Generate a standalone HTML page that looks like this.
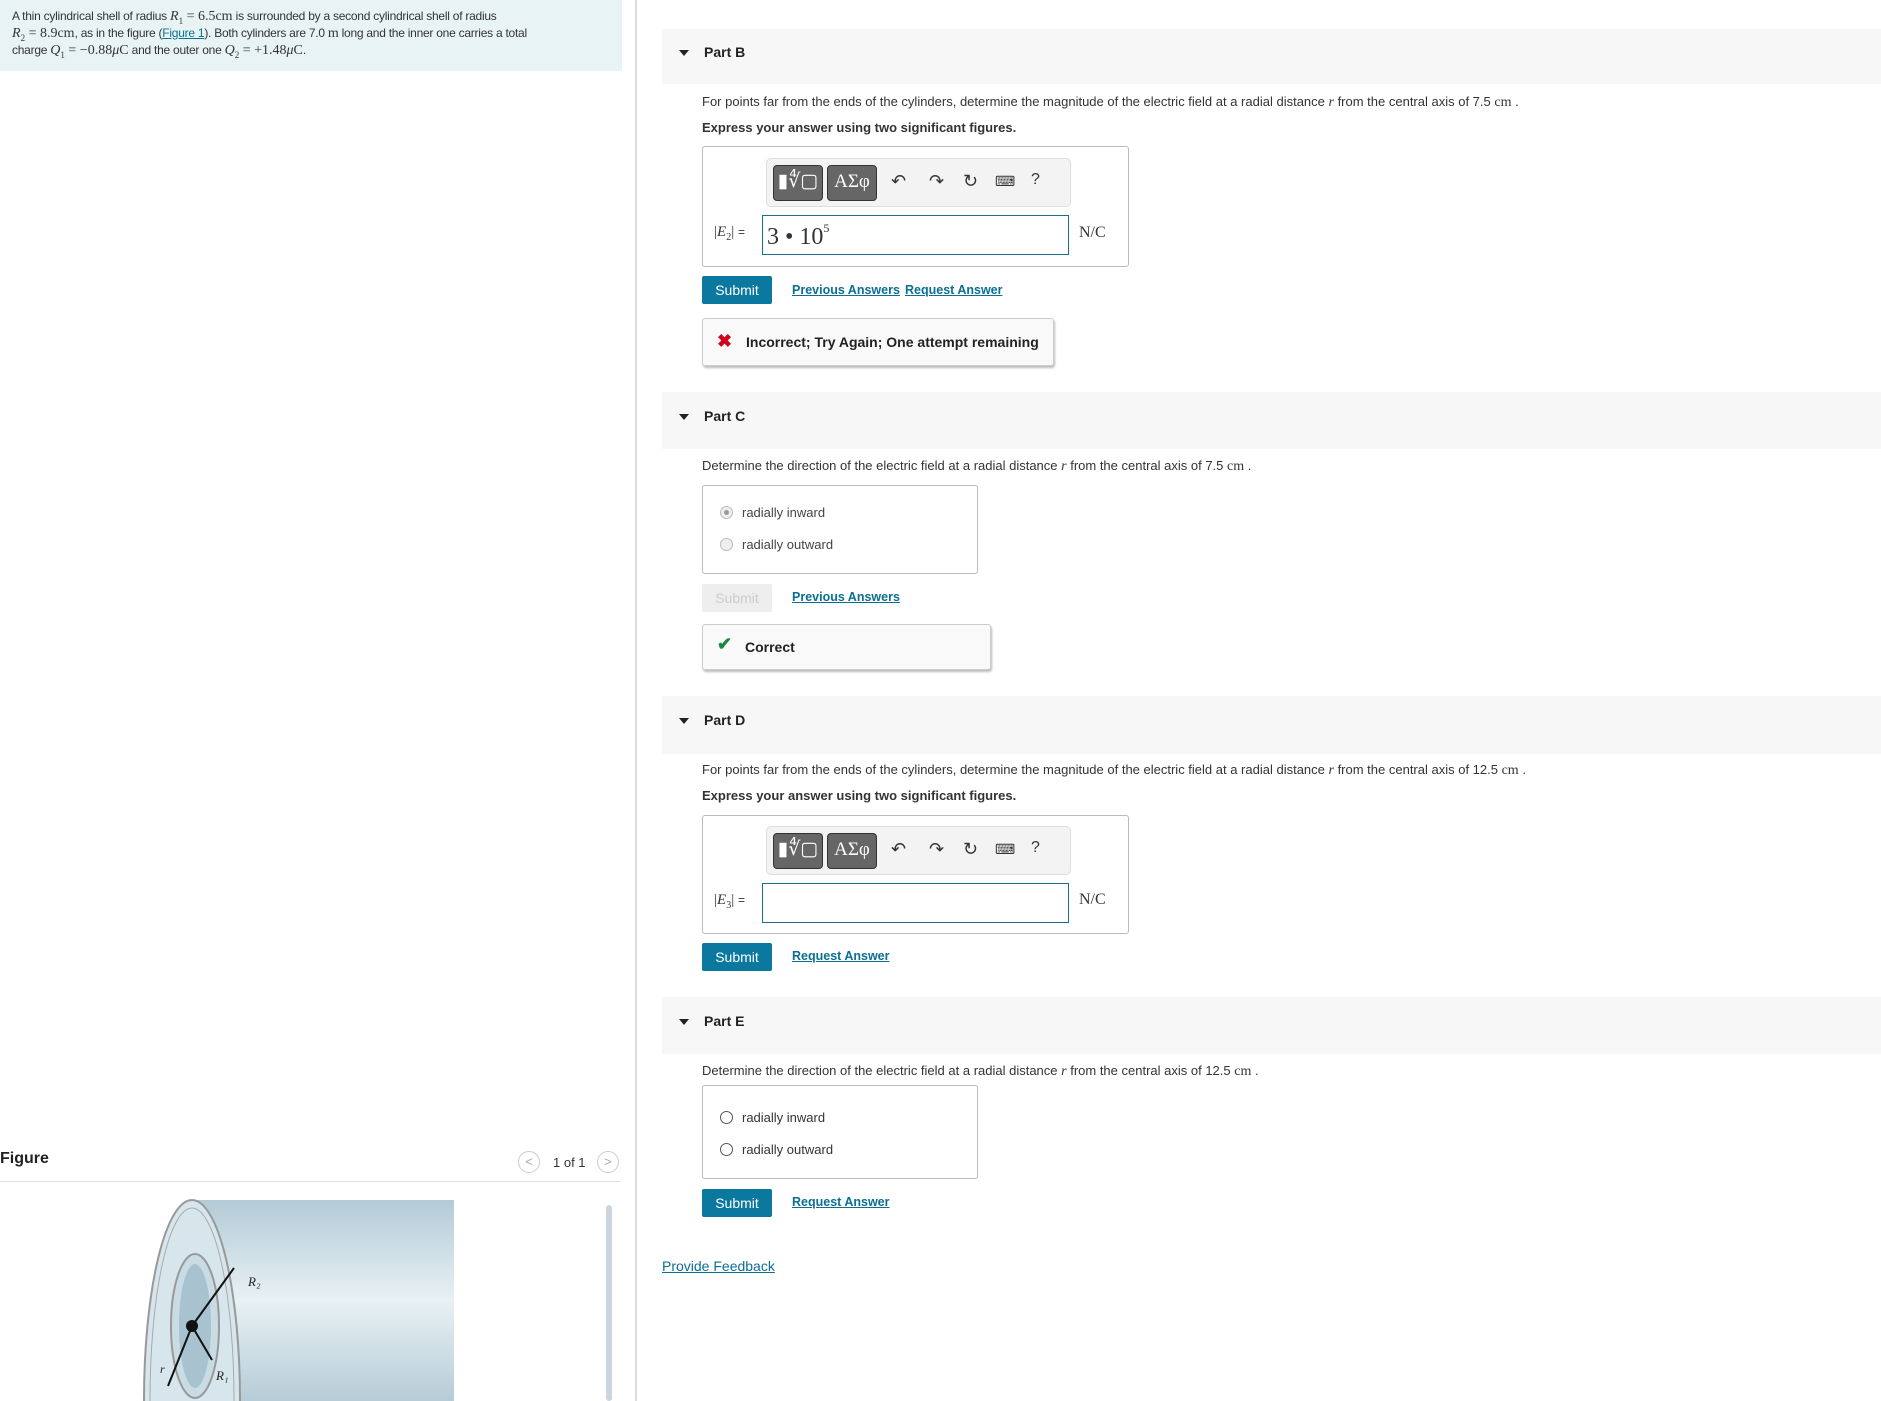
<!DOCTYPE html>
<html><head><meta charset="utf-8"><style>
html,body{margin:0;width:1881px;height:1401px;overflow:hidden}
body{position:relative;background:#fff;font-family:"Liberation Sans",sans-serif;color:#333}
.a{position:absolute}
.m{font-family:"Liberation Serif",serif}
sub{line-height:0}
.band{position:absolute;left:662px;width:1219px;background:#f7f7f7}
.band .t{position:absolute;left:17px;top:50%;margin-top:-7px;width:0;height:0;border-left:5px solid transparent;border-right:5px solid transparent;border-top:6px solid #222}
.band .l{position:absolute;left:42px;top:50%;margin-top:-13px;font-size:14px;color:#222;font-weight:bold}
.txt{position:absolute;left:702px;font-size:13px;color:#333}
.bold{font-weight:bold;color:#333}
.box{position:absolute;left:702px;border:1px solid #bbb;border-radius:3px;background:#fff}
.tb{position:absolute;left:766px;width:303px;height:47px;background:#f3f3f3;border:1px solid #ddd;border-radius:5px}
.btn{position:absolute;top:6px;height:34px;background:#666;border:1px solid #333;border-radius:4px;color:#fff;font-family:"Liberation Serif",serif;font-size:19px;text-align:center;line-height:32px}
.ic{position:absolute;top:12px;font-size:18px;color:#333}
.inp{position:absolute;left:762px;width:305px;height:38px;border:1px solid #1a6f8d}
.sub{position:absolute;left:702px;width:70px;height:28px;background:#0b78a0;color:#fff;font-size:14px;text-align:center;line-height:28px;border-radius:2px}
.lk{position:absolute;font-size:12.5px;color:#0b6f94;text-decoration:underline;font-weight:bold}
.fb{position:absolute;left:702px;border:1px solid #ccc;border-radius:3px;background:#f9f9f9;box-shadow:1px 2px 2px #bbb}
.rd{position:absolute;left:720px;width:11px;height:11px;border:1px solid #999;border-radius:50%;background:#fff}
.rl{position:absolute;left:742px;font-size:13px;color:#333}
</style></head><body>
<div class="a" style="left:0;top:0;width:622px;height:71px;background:#e8f4f4"></div>
<div class="a" style="left:12px;top:8px;width:605px;font-size:12px;letter-spacing:-0.25px;line-height:16px;color:#333">A thin cylindrical shell of radius <span class="m" style="font-size:14px;letter-spacing:0"><i>R</i><sub style="font-size:9px">1</sub> = 6.5cm</span> is surrounded by a second cylindrical shell of radius<br><span class="m" style="font-size:14px;letter-spacing:0"><i>R</i><sub style="font-size:9px">2</sub> = 8.9cm</span>, as in the figure (<span style="color:#0b6f94;text-decoration:underline">Figure 1</span>). Both cylinders are 7.0 <span class="m" style="font-size:14px">m</span> long and the inner one carries a total<br>charge <span class="m" style="font-size:14px;letter-spacing:0"><i>Q</i><sub style="font-size:9px">1</sub> = −0.88<i>μ</i>C</span> and the outer one <span class="m" style="font-size:14px;letter-spacing:0"><i>Q</i><sub style="font-size:9px">2</sub> = +1.48<i>μ</i>C</span>.</div>
<div class="a" style="left:635px;top:0;width:2px;height:1401px;background:#ddd"></div>
<div class="a" style="left:0;top:1150px;font-size:16px;font-weight:bold;color:#222">Figure</div>
<div class="a" style="left:518px;top:1151px;width:20px;height:20px;border:1px solid #ccc;border-radius:50%;color:#aaa;font-size:13px;text-align:center;line-height:20px">&lt;</div>
<div class="a" style="left:553px;top:1155px;font-size:13px">1 of 1</div>
<div class="a" style="left:597px;top:1151px;width:20px;height:20px;border:1px solid #ccc;border-radius:50%;color:#aaa;font-size:13px;text-align:center;line-height:20px">&gt;</div>
<div class="a" style="left:0;top:1181px;width:620px;height:1px;background:#ddd"></div>
<div class="a" style="left:606px;top:1205px;width:6px;height:196px;background:#ccd6de;border-radius:3px"></div>
<svg class="a" style="left:140px;top:1195px" width="320" height="206">
<defs><linearGradient id="g" x1="0" y1="0" x2="0" y2="1"><stop offset="0" stop-color="#b3cbd6"/><stop offset=".5" stop-color="#e8f1f4"/><stop offset="1" stop-color="#b6ccd6"/></linearGradient></defs>
<rect x="52" y="5" width="262" height="201" fill="url(#g)"/>
<ellipse cx="52" cy="205" rx="48" ry="200" fill="#d6e6ec" stroke="#999" stroke-width="2"/>
<ellipse cx="52" cy="205" rx="42" ry="192" fill="none" stroke="#aaa"/>
<ellipse cx="55" cy="131" rx="24" ry="72" fill="#c9dce4" stroke="#999" stroke-width="2"/>
<ellipse cx="55" cy="131" rx="16" ry="62" fill="#a8c3cf"/>
<line x1="52" y1="131" x2="94" y2="73" stroke="#111" stroke-width="2"/>
<line x1="52" y1="131" x2="28" y2="191" stroke="#111" stroke-width="2"/>
<line x1="52" y1="131" x2="72" y2="165" stroke="#111" stroke-width="2"/>
<circle cx="52" cy="131" r="6" fill="#111"/>
<text x="108" y="91" font-family="Liberation Serif" font-style="italic" font-size="13" fill="#222">R₂</text>
<text x="76" y="185" font-family="Liberation Serif" font-style="italic" font-size="13" fill="#222">R₁</text>
<text x="20" y="178" font-family="Liberation Serif" font-style="italic" font-size="12" fill="#222">r</text>
</svg>

<!-- Part B -->
<div class="band" style="top:29px;height:55px"><div class="t"></div><div class="l">Part B</div></div>
<div class="txt" style="top:94px">For points far from the ends of the cylinders, determine the magnitude of the electric field at a radial distance <i class="m" style="font-size:14px">r</i> from the central axis of 7.5 <span class="m" style="font-size:14px">cm</span> .</div>
<div class="txt bold" style="top:120px">Express your answer using two significant figures.</div>
<div class="box" style="top:146px;width:425px;height:119px"></div>
<div class="tb" style="top:158px"><div class="btn" style="left:6px;width:48px">▮∜▢</div><div class="btn" style="left:60px;width:48px">ΑΣφ</div><div class="ic" style="left:124px">↶</div><div class="ic" style="left:162px">↷</div><div class="ic" style="left:196px">↻</div><div class="ic" style="left:228px;font-size:14px;top:14px">⌨</div><div class="ic" style="left:264px;font-size:16px">?</div></div>
<div class="a m" style="left:714px;top:224px;font-size:15px">|<i>E</i><sub style="font-size:10px">2</sub>| <span style="font-family:'Liberation Sans';font-size:12px">=</span></div>
<div class="inp" style="top:215px"><span class="m" style="position:absolute;left:4px;top:5px;font-size:24px">3 • 10<sup style="font-size:12px;vertical-align:12px">5</sup></span></div>
<div class="a m" style="left:1079px;top:224px;font-size:16px">N/C</div>
<div class="sub" style="top:276px">Submit</div>
<div class="lk" style="left:792px;top:283px">Previous Answers</div>
<div class="lk" style="left:905px;top:283px">Request Answer</div>
<div class="fb" style="top:318px;width:350px;height:46px"><span style="position:absolute;left:14px;top:12px;color:#d0021b;font-size:18px;font-weight:bold">✖</span><span style="position:absolute;left:43px;top:15px;font-size:14px;color:#222;font-weight:bold">Incorrect; Try Again; One attempt remaining</span></div>

<!-- Part C -->
<div class="band" style="top:392px;height:57px"><div class="t"></div><div class="l">Part C</div></div>
<div class="txt" style="top:458px">Determine the direction of the electric field at a radial distance <i class="m" style="font-size:14px">r</i> from the central axis of 7.5 <span class="m" style="font-size:14px">cm</span> .</div>
<div class="box" style="top:485px;width:274px;height:87px"></div>
<div class="rd" style="top:506px;border-color:#bbb;background:#eee"><div style="position:absolute;left:3px;top:3px;width:5px;height:5px;border-radius:50%;background:#999"></div></div>
<div class="rl" style="top:505px;color:#444">radially inward</div>
<div class="rd" style="top:538px;border-color:#bbb;background:#eee"></div>
<div class="rl" style="top:537px;color:#444">radially outward</div>
<div class="sub" style="top:584px;background:#eee;color:#ccc">Submit</div>
<div class="lk" style="left:792px;top:590px">Previous Answers</div>
<div class="fb" style="top:624px;width:287px;height:44px"><span style="position:absolute;left:14px;top:9px;color:#168a3a;font-size:18px;font-weight:bold">✔</span><span style="position:absolute;left:42px;top:14px;font-size:14px;color:#222;font-weight:bold">Correct</span></div>

<!-- Part D -->
<div class="band" style="top:696px;height:58px"><div class="t"></div><div class="l">Part D</div></div>
<div class="txt" style="top:762px">For points far from the ends of the cylinders, determine the magnitude of the electric field at a radial distance <i class="m" style="font-size:14px">r</i> from the central axis of 12.5 <span class="m" style="font-size:14px">cm</span> .</div>
<div class="txt bold" style="top:788px">Express your answer using two significant figures.</div>
<div class="box" style="top:815px;width:425px;height:117px"></div>
<div class="tb" style="top:826px"><div class="btn" style="left:6px;width:48px">▮∜▢</div><div class="btn" style="left:60px;width:48px">ΑΣφ</div><div class="ic" style="left:124px">↶</div><div class="ic" style="left:162px">↷</div><div class="ic" style="left:196px">↻</div><div class="ic" style="left:228px;font-size:14px;top:14px">⌨</div><div class="ic" style="left:264px;font-size:16px">?</div></div>
<div class="a m" style="left:714px;top:892px;font-size:15px">|<i>E</i><sub style="font-size:10px">3</sub>| <span style="font-family:'Liberation Sans';font-size:12px">=</span></div>
<div class="inp" style="top:883px"></div>
<div class="a m" style="left:1079px;top:891px;font-size:16px">N/C</div>
<div class="sub" style="top:943px">Submit</div>
<div class="lk" style="left:792px;top:949px">Request Answer</div>

<!-- Part E -->
<div class="band" style="top:997px;height:57px"><div class="t"></div><div class="l">Part E</div></div>
<div class="txt" style="top:1063px">Determine the direction of the electric field at a radial distance <i class="m" style="font-size:14px">r</i> from the central axis of 12.5 <span class="m" style="font-size:14px">cm</span> .</div>
<div class="box" style="top:1085px;width:274px;height:92px"></div>
<div class="rd" style="top:1111px;border-color:#555"></div>
<div class="rl" style="top:1110px">radially inward</div>
<div class="rd" style="top:1143px;border-color:#555"></div>
<div class="rl" style="top:1142px">radially outward</div>
<div class="sub" style="top:1189px">Submit</div>
<div class="lk" style="left:792px;top:1195px">Request Answer</div>
<div class="a" style="left:662px;top:1258px;font-size:14px;color:#0b6f94;text-decoration:underline">Provide Feedback</div>
</body></html>
